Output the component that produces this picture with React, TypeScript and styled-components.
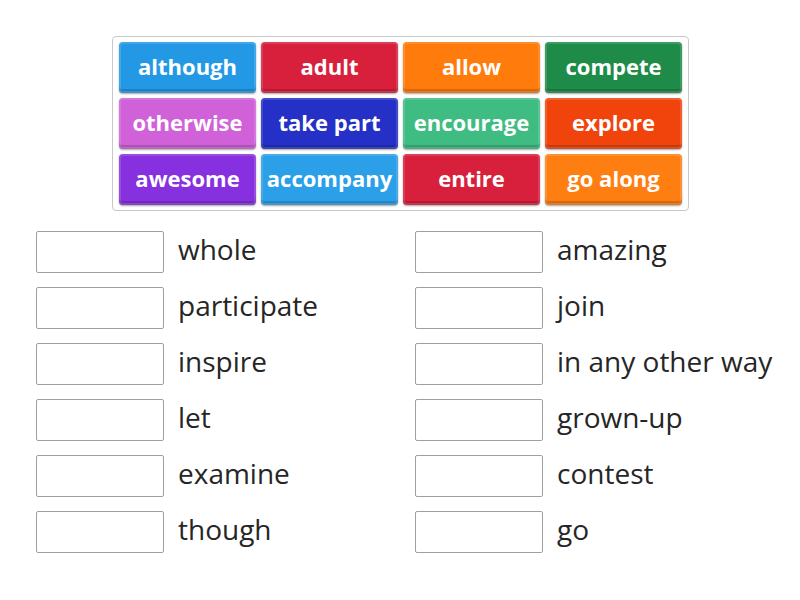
import React from "react";
import styled, { createGlobalStyle } from "styled-components";

const Global = createGlobalStyle`
  html, body { margin: 0; padding: 0; background: #ffffff; }
  body { font-family: "Open Sans", "Liberation Sans", sans-serif; }
`;

const Page = styled.div`
  width: 800px;
  height: 600px;
  display: flex;
  flex-direction: column;
  box-sizing: border-box;
  padding-top: 36px;
`;

const Bank = styled.div`
  align-self: flex-start;
  margin-left: 112px;
  display: grid;
  grid-template-columns: repeat(4, 137px);
  grid-auto-rows: 51px;
  column-gap: 5px;
  row-gap: 5px;
  padding: 5px 6px;
  border: 1px solid #c8c8c8;
  border-radius: 4px;
  background: #fff;
`;

const Tile = styled.div<{ $c: string }>`
  background: ${(p) => p.$c};
  border-radius: 4px;
  display: flex;
  align-items: center;
  justify-content: center;
  padding-bottom: 3px;
  box-sizing: border-box;
  color: #fff;
  font-weight: 700;
  font-size: 22px;
  white-space: nowrap;
  box-shadow: inset 0 0 0 2px rgba(255, 255, 255, 0.14),
    inset 0 -4px 0 rgba(0, 0, 0, 0.16), 0 1px 2px rgba(0, 0, 0, 0.35);
`;

const Answers = styled.div`
  margin-top: 20px;
  margin-left: 36px;
  display: grid;
  grid-template-columns: 379px 379px;
  grid-auto-flow: column;
  grid-template-rows: repeat(6, 42px);
  row-gap: 14px;
`;

const Row = styled.div`
  display: flex;
  align-items: center;
  gap: 14px;
`;

const Slot = styled.div`
  width: 128px;
  height: 42px;
  box-sizing: border-box;
  border: 1px solid #a0a0a0;
  border-radius: 2px;
  background: #fff;
  flex: none;
`;

const Label = styled.span`
  font-size: 28px;
  color: #262626;
  margin-top: -6px;
  white-space: nowrap;
`;

const tiles: [string, string][] = [
  ["although", "#2399e6"],
  ["adult", "#d81f3c"],
  ["allow", "#ff7b0c"],
  ["compete", "#1f8b48"],
  ["otherwise", "#d061d8"],
  ["take part", "#2430c6"],
  ["encourage", "#3ebc82"],
  ["explore", "#f0440c"],
  ["awesome", "#8730df"],
  ["accompany", "#2b9fe8"],
  ["entire", "#d81f3c"],
  ["go along", "#ff7e12"],
];

const left = ["whole", "participate", "inspire", "let", "examine", "though"];
const right = ["amazing", "join", "in any other way", "grown-up", "contest", "go"];

export default function App() {
  return (
    <>
      <Global />
      <Page>
        <Bank>
          {tiles.map(([t, c]) => (
            <Tile key={t} $c={c}>
              {t}
            </Tile>
          ))}
        </Bank>
        <Answers>
          {[...left, ...right].map((w) => (
            <Row key={w}>
              <Slot />
              <Label>{w}</Label>
            </Row>
          ))}
        </Answers>
      </Page>
    </>
  );
}
